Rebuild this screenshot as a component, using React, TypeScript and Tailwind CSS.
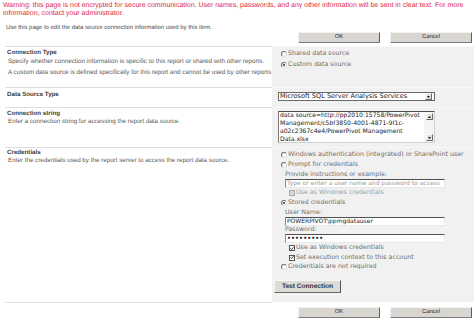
import React from 'react';

const sans = "font-['Liberation_Sans',Arial,sans-serif]";
const verdana = "font-['DejaVu_Sans',Verdana,sans-serif]";

const Radio = ({ checked }: { checked?: boolean }) => (
  <span className="flex items-center justify-center w-[6px] h-[6px] rounded-full border border-t-[#6f6f6f] border-l-[#6f6f6f] border-r-[#dedede] border-b-[#dedede] bg-white shrink-0">
    {checked && <span className="w-[2px] h-[2px] rounded-full bg-[#2a2a2a]" />}
  </span>
);

const Check = ({ checked, disabled }: { checked?: boolean; disabled?: boolean }) => (
  <span
    className={`flex items-center justify-center w-[6px] h-[6px] border shrink-0 ${
      disabled ? 'bg-[#d6d6d6] border-[#a8a8a8]' : 'bg-white border-[#555]'
    }`}
  >
    {checked && (
      <svg width="5" height="5" viewBox="0 0 5 5">
        <path d="M0.6 2.4 L2 3.8 L4.4 0.8" stroke="#222" strokeWidth="1.1" fill="none" />
      </svg>
    )}
  </span>
);

const Btn = ({ text }: { text: string }) => (
  <div className="w-[82px] h-[11px] flex items-center justify-center bg-[#d9d6d1] border border-t-[#f2f2f2] border-l-[#f2f2f2] border-r-[#5e5e5e] border-b-[#7c7c7c] text-[5.8px] text-[#222]">
    {text}
  </div>
);

const Arrow = ({ up }: { up?: boolean }) => (
  <div className="w-[7px] h-[7px] flex items-center justify-center bg-[#e4e2de] border border-t-[#fafafa] border-l-[#fafafa] border-r-[#6a6a6a] border-b-[#6a6a6a]">
    <svg width="3" height="2" viewBox="0 0 3 2">
      <path d={up ? 'M0 2 L1.5 0 L3 2 Z' : 'M0 0 L3 0 L1.5 2 Z'} fill="#111" />
    </svg>
  </div>
);

const Field = ({ children, muted }: { children?: React.ReactNode; muted?: boolean }) => (
  <div
    className={`w-[160px] h-[9px] bg-white border border-t-[#505050] border-l-[#8a8a8a] border-r-[#e8e8e8] border-b-[#e8e8e8] pl-[1px] flex items-center overflow-hidden whitespace-nowrap text-[6px] ${
      muted ? 'text-[#9a9a9a]' : 'text-[#222]'
    }`}
  >
    {children}
  </div>
);

const Line = ({ h, className, children }: { h: string; className?: string; children: React.ReactNode }) => (
  <div className={`flex items-center gap-[1px] whitespace-nowrap ${h} ${className ?? ''}`}>{children}</div>
);

export default function App() {
  return (
    <div className={`w-[474px] h-[323px] bg-white overflow-hidden [text-rendering:geometricPrecision] ${sans}`}>
      {/* warning */}
      <div className="pl-[3px] pt-[2px] text-[#e3263e] text-[7px] leading-[7.5px] whitespace-nowrap">
        Warning: this page is not encrypted for secure communication. User names, passwords, and any other information will be sent in clear text. For more
        <br />
        information, contact your administrator.
      </div>
      <div className="pl-[6px] mt-[8px] text-[5.95px] leading-[6px] text-[#4a4a4a] whitespace-nowrap">
        Use this page to edit the data source connection information used by this item.
      </div>
      <div className="flex justify-end gap-[10px] pr-[2px] mt-[1px]">
        <Btn text="OK" />
        <Btn text="Cancel" />
      </div>

      <div className="mt-[3px] pl-[5px]">
        {/* Connection Type */}
        <div className="flex h-[41px]">
          <div className="w-[267px] border-t border-[#dedede] pt-[2px] text-[6.3px] text-[#5a5a5a] whitespace-nowrap">
            <div className="pl-[2px] leading-[7px] font-bold text-[6.2px] text-[#404040]">Connection Type</div>
            <div className="pl-[3px] leading-[7px] mt-[2px]">Specify whether connection information is specific to this report or shared with other reports.</div>
            <div className="pl-[3px] leading-[7px] mt-[4px]">A custom data source is defined specifically for this report and cannot be used by other reports.</div>
          </div>
          <div className={`flex-1 bg-[#f1f1f1] border-t border-[#f7f7f7] pl-[9px] pt-[1px] text-[6.3px] text-[#6e6e6e] ${verdana}`}>
            <Line h="h-[11px]"><Radio /><span>Shared data source</span></Line>
            <Line h="h-[11px]"><Radio checked /><span>Custom data source</span></Line>
          </div>
        </div>

        {/* Data Source Type */}
        <div className="flex h-[20px]">
          <div className="w-[267px] border-t border-[#dedede] pt-[3px] pl-[2px] leading-[7px] font-bold text-[6.2px] text-[#404040] whitespace-nowrap">
            Data Source Type
          </div>
          <div className={`flex-1 bg-[#f1f1f1] border-t border-[#f7f7f7] pl-[6px] pt-[4px] ${verdana}`}>
            <div className="w-[157px] h-[9px] bg-white border border-[#6a6a6a] flex items-center justify-between pl-[1px] pr-[2px] text-[6.55px] text-[#222] whitespace-nowrap">
              <span>Microsoft SQL Server Analysis Services</span>
              <Arrow />
            </div>
          </div>
        </div>

        {/* Connection string */}
        <div className="flex h-[40px]">
          <div className="w-[267px] border-t border-[#dedede] pt-[2px] text-[6.25px] text-[#5a5a5a] whitespace-nowrap">
            <div className="pl-[2px] leading-[7px] font-bold text-[6.2px] text-[#404040]">Connection string</div>
            <div className="pl-[3px] leading-[7px] mt-[1px]">Enter a connection string for accessing the report data source.</div>
          </div>
          <div className={`flex-1 bg-[#f1f1f1] border-t border-[#f7f7f7] pl-[6px] pt-[3px] ${verdana}`}>
            <div className="w-[157px] h-[32px] bg-white border border-t-[#505050] border-l-[#7a7a7a] border-r-[#cfcfcf] border-b-[#cfcfcf] flex overflow-hidden">
              <div className="flex-1 pl-[1px] text-[6.1px] leading-[8px] text-[#222] whitespace-nowrap">
                data source=http://pp2010:15758/PowerPivot
                <br />
                Management/c5bf3850-4001-4871-9f1c-
                <br />
                a02c2367c4e4/PowerPivot Management
                <br />
                Data.xlsx
              </div>
              <div className="w-[10px] flex flex-col justify-between items-center py-[1px] bg-[#f4f4f4]">
                <Arrow up />
                <Arrow />
              </div>
            </div>
          </div>
        </div>

        {/* Credentials */}
        <div className="flex h-[155px]">
          <div className="w-[267px] border-t border-[#dedede] pt-[1px] text-[6.25px] text-[#5a5a5a] whitespace-nowrap">
            <div className="pl-[2px] leading-[7px] font-bold text-[6.2px] text-[#404040]">Credentials</div>
            <div className="pl-[3px] leading-[7px] mt-[1px]">Enter the credentials used by the report server to access the report data source.</div>
          </div>
          <div className={`flex-1 bg-[#f1f1f1] border-t border-[#f7f7f7] pl-[9px] pt-[2px] text-[6.3px] text-[#6e6e6e] ${verdana}`}>
            <Line h="h-[10px]"><Radio /><span>Windows authentication (integrated) or SharePoint user</span></Line>
            <Line h="h-[10px]"><Radio /><span>Prompt for credentials</span></Line>
            <div className="pl-[4px]">
              <Line h="h-[9px]"><span>Provide instructions or example:</span></Line>
              <Field muted>Type or enter a user name and password to access</Field>
              <Line h="h-[10px]" className="pl-[4px] text-[#a0a0a0]"><Check disabled /><span>Use as Windows credentials</span></Line>
            </div>
            <Line h="h-[10px]"><Radio checked /><span>Stored credentials</span></Line>
            <div className="pl-[4px]">
              <Line h="h-[9px]"><span>User Name:</span></Line>
              <Field>POWERPIVOT\ppmgdatauser</Field>
              <Line h="h-[8px]"><span>Password:</span></Line>
              <Field>
                <span className="font-bold tracking-[0.2px]">•••••••••</span>
              </Field>
              <Line h="h-[10px]" className="pl-[4px]"><Check checked /><span>Use as Windows credentials</span></Line>
              <Line h="h-[9px]" className="pl-[4px]"><Check checked /><span>Set execution context to this account</span></Line>
            </div>
            <Line h="h-[10px]"><Radio /><span>Credentials are not required</span></Line>
            <div className={`mt-[8px] -ml-[7px] w-[67px] h-[13px] flex items-center justify-center bg-[#dedbd6] border border-t-[#f6f6f6] border-l-[#f6f6f6] border-r-[#555] border-b-[#6a6a6a] text-[6.6px] font-bold text-[#333] ${sans}`}>
              Test Connection
            </div>
          </div>
        </div>

        <div className="w-[267px] border-t border-[#e2e2e2]" />
      </div>

      <div className="flex justify-end gap-[10px] pr-[2px] mt-[4px]">
        <Btn text="OK" />
        <Btn text="Cancel" />
      </div>
    </div>
  );
}
